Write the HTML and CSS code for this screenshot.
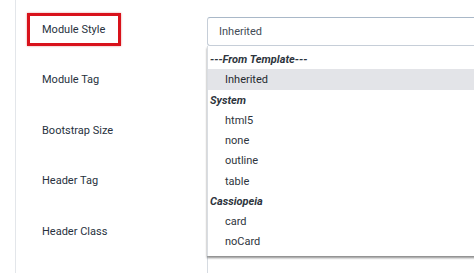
FILE: index.html
```html
<!DOCTYPE html>
<html>
<head>
<meta charset="utf-8">
<link rel="stylesheet" href="styles.css">
</head>
<body>
<div class="panel">
  <div class="labels">
    <div class="row"><span class="label hl">Module Style</span></div>
    <div class="row"><span class="label">Module Tag</span></div>
    <div class="row"><span class="label">Bootstrap Size</span></div>
    <div class="row"><span class="label">Header Tag</span></div>
    <div class="row"><span class="label">Header Class</span></div>
  </div>
  <div class="controls">
    <div class="select">Inherited</div>
    <div class="under"></div>
    <ul class="dropdown">
      <li class="group">---From Template---</li>
      <li class="opt active">Inherited</li>
      <li class="group">System</li>
      <li class="opt">html5</li>
      <li class="opt">none</li>
      <li class="opt">outline</li>
      <li class="opt">table</li>
      <li class="group">Cassiopeia</li>
      <li class="opt">card</li>
      <li class="opt">noCard</li>
    </ul>
  </div>
</div>
</body>
</html>
```
FILE: styles.css
```css
html, body {
  margin: 0;
  padding: 0;
  background: #fff;
  overflow: hidden;
}
body {
  width: 474px;
  height: 273px;
  font-family: Roboto, "Liberation Sans", sans-serif;
}
.panel {
  margin-left: 15px;
  border-left: 1px solid #e3e6ea;
  height: 273px;
  display: flex;
  position: relative;
  overflow: hidden;
}
.labels {
  width: 191px;
  flex-shrink: 0;
  padding-top: 4px;
}
.row {
  height: 50.5px;
  display: flex;
  align-items: center;
  padding-left: 11px;
}
.label {
  font-size: 11px;
  color: #27313d;
  padding: 7px 13px 7px 12px;
  border: 3px solid transparent;
}
.label.hl {
  border-color: #d8121b;
  box-shadow: 0 0 2px rgba(200,0,0,.4);
}
.controls {
  flex: 1;
  min-width: 0;
  position: relative;
  padding-top: 17px;
}
.select {
  box-sizing: border-box;
  height: 29px;
  width: 300px;
  border: 1px solid #c6ced8;
  border-top-color: #a9b8c8;
  border-right: none;
  border-radius: 3px 0 0 3px;
  font-size: 11px;
  color: #434c56;
  padding-left: 11px;
  display: flex;
  align-items: center;
}
.under {
  position: absolute;
  left: 0;
  top: 230px;
  width: 300px;
  height: 43px;
  border-left: 1px solid #d6dbe1;
}
.dropdown {
  position: absolute;
  left: 0;
  top: 46px;
  width: 300px;
  margin: 0;
  padding: 3px 0 4px;
  list-style: none;
  background: #fff;
  border-left: 1px solid #d9dde2;
  box-shadow: 0 2px 2px rgba(0,0,0,.45);
  z-index: 2;
}
.dropdown li {
  height: 20.25px;
  line-height: 21px;
  font-size: 11px;
  color: #2e353d;
}
.group {
  font-weight: bold;
  font-style: italic;
  padding-left: 2px;
  color: #2b2f33;
}
.opt {
  padding-left: 17px;
}
.opt.active {
  background: #e3e4e8;
  color: #262b30;
}
```
